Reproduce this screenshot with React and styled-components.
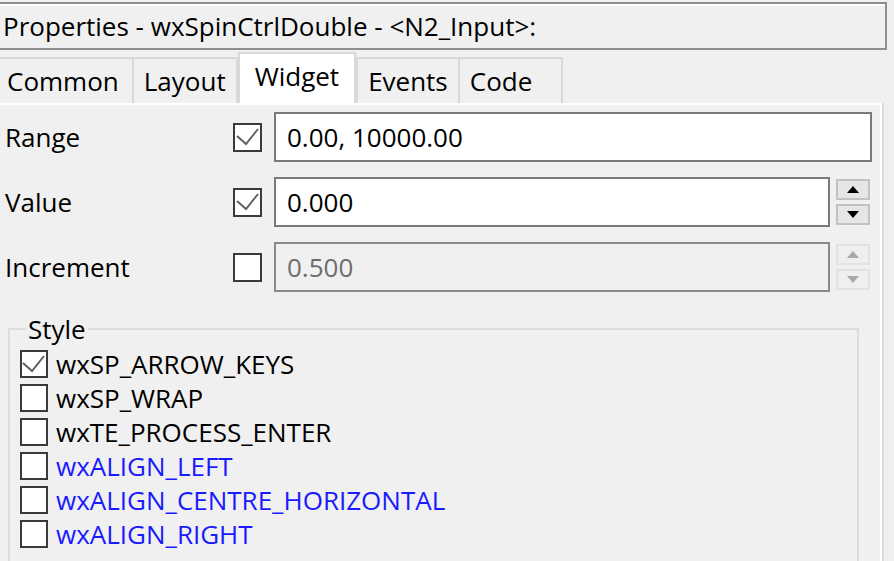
import React from 'react'
import styled, { createGlobalStyle } from 'styled-components'

const GlobalStyle = createGlobalStyle`
  body {
    margin: 0;
    background: #f0f0f0;
    font-family: 'Open Sans', 'Noto Sans', sans-serif;
    font-size: 26px;
    color: #000;
    overflow: hidden;
  }
`

const Page = styled.div`
  width: 894px;
  height: 561px;
  overflow: hidden;
  background: #f0f0f0;
`

const Header = styled.div`
  margin: 2px 7px 0 0;
  height: 44px;
  border: 2px solid #8e8e8e;
  border-left: none;
  box-shadow: inset 0 2px 0 #fff;
  display: flex;
  align-items: center;
  padding-left: 3px;
  white-space: nowrap;
`

const TabBar = styled.div`
  display: flex;
  align-items: flex-end;
  height: 51px;
  margin-top: 2px;
`

const Tab = styled.div`
  height: ${p => (p.active ? '51px' : '46px')};
  padding: ${p => (p.active ? '0 15px 5px' : '0 10px')};
  padding-left: ${p => (p.first ? '7px' : undefined)};
  padding-right: ${p => (p.first ? '13px' : undefined)};
  min-width: ${p => p.minWidth || 0}px;
  display: flex;
  align-items: center;
  border: 2px solid #d9d9d9;
  border-bottom: none;
  border-left: ${p => (p.first ? 'none' : '2px solid #d9d9d9')};
  margin-left: ${p => (p.first || p.active || p.afterActive ? '0' : '-2px')};
  background: ${p => (p.active ? '#fff' : '#f0f0f0')};
  box-sizing: border-box;
  position: relative;
  z-index: ${p => (p.active ? 1 : 0)};
`

const Panel = styled.div`
  margin-right: 12px;
  border-top: 2px solid #fff;
  border-right: 2px solid #fff;
  box-shadow: 2px 0 0 #dcdcdc;
  padding: 7px 8px 0 5px;
  height: 460px;
`

const Row = styled.div`
  display: grid;
  grid-template-columns: 216px 29px 1fr;
  column-gap: 12px;
  align-items: center;
  height: 50px;
  margin-bottom: 15px;
`

const Label = styled.div`
  white-space: nowrap;
`

const Check = styled.div`
  width: 29px;
  height: 29px;
  box-sizing: border-box;
  border: 2px solid #3a3a3a;
  background: #fff;
  display: flex;
  align-items: center;
  justify-content: center;
`

const FieldWrap = styled.div`
  display: flex;
  align-items: center;
  gap: 6px;
  height: 50px;
`

const Field = styled.div`
  flex: 1;
  height: 50px;
  box-sizing: border-box;
  border: 2px solid ${p => (p.disabled ? '#8a8a8a' : '#7a7a7a')};
  background: ${p => (p.disabled ? '#f0f0f0' : '#fff')};
  color: ${p => (p.disabled ? '#6d6d6d' : '#000')};
  display: flex;
  align-items: center;
  padding-left: 11px;
`

const Spin = styled.div`
  display: flex;
  flex-direction: column;
  gap: 4px;
  width: 34px;
  margin-right: 2px;
`

const SpinButton = styled.div`
  height: 21px;
  box-sizing: border-box;
  border: 2px solid ${p => (p.disabled ? '#e2e2e2' : '#c2c2c2')};
  background: ${p => (p.disabled ? '#efefef' : '#e6e6e6')};
  display: flex;
  align-items: center;
  justify-content: center;
`

const Arrow = styled.div`
  width: 0;
  height: 0;
  border-left: 6px solid transparent;
  border-right: 6px solid transparent;
  ${p =>
    p.up
      ? `border-bottom: 7px solid ${p.disabled ? '#a8a8a8' : '#000'};`
      : `border-top: 7px solid ${p.disabled ? '#a8a8a8' : '#000'};`}
`

const Group = styled.fieldset`
  margin: 24px 13px 0 3px;
  padding: 5px 0 0 10px;
  border: 2px solid #dcdcdc;
  border-bottom: none;
  height: 240px;
`

const Legend = styled.legend`
  padding: 0 2px;
  margin-left: 6px;
  line-height: 26px;
`

const StyleItem = styled.div`
  display: flex;
  align-items: center;
  gap: 8px;
  height: 34px;
  color: ${p => (p.blue ? '#1a1aff' : '#000')};
  white-space: nowrap;
`

const SmallCheck = styled(Check)`
  width: 28px;
  height: 28px;
`

const Tick = () => (
  <svg width="24" height="24" viewBox="0 0 24 24">
    <polyline points="1,11 10,19 22,4" fill="none" stroke="#5f5f5f" strokeWidth="2" />
  </svg>
)

const SpinBox = ({ disabled }) => (
  <Spin>
    <SpinButton disabled={disabled}>
      <Arrow up disabled={disabled} />
    </SpinButton>
    <SpinButton disabled={disabled}>
      <Arrow disabled={disabled} />
    </SpinButton>
  </Spin>
)

const tabs = [
  { name: 'Common' },
  { name: 'Layout' },
  { name: 'Widget' },
  { name: 'Events' },
  { name: 'Code', minWidth: 105 }
]

const styles = [
  { name: 'wxSP_ARROW_KEYS', checked: true },
  { name: 'wxSP_WRAP' },
  { name: 'wxTE_PROCESS_ENTER' },
  { name: 'wxALIGN_LEFT', blue: true },
  { name: 'wxALIGN_CENTRE_HORIZONTAL', blue: true },
  { name: 'wxALIGN_RIGHT', blue: true }
]

const App = () => {
  return (
    <Page>
      <GlobalStyle />
      <Header>Properties - wxSpinCtrlDouble - &lt;N2_Input&gt;:</Header>
      <TabBar>
        {tabs.map((t, i) => (
          <Tab
            key={t.name}
            first={i === 0}
            active={t.name === 'Widget'}
            afterActive={i > 0 && tabs[i - 1].name === 'Widget'}
            minWidth={t.minWidth}
          >
            {t.name}
          </Tab>
        ))}
      </TabBar>
      <Panel>
        <Row>
          <Label>Range</Label>
          <Check><Tick /></Check>
          <FieldWrap>
            <Field>0.00, 10000.00</Field>
          </FieldWrap>
        </Row>
        <Row>
          <Label>Value</Label>
          <Check><Tick /></Check>
          <FieldWrap>
            <Field>0.000</Field>
            <SpinBox />
          </FieldWrap>
        </Row>
        <Row>
          <Label>Increment</Label>
          <Check />
          <FieldWrap>
            <Field disabled>0.500</Field>
            <SpinBox disabled />
          </FieldWrap>
        </Row>
        <Group>
          <Legend>Style</Legend>
          {styles.map(s => (
            <StyleItem key={s.name} blue={s.blue}>
              <SmallCheck>{s.checked && <Tick />}</SmallCheck>
              {s.name}
            </StyleItem>
          ))}
        </Group>
      </Panel>
    </Page>
  )
}

export default App
